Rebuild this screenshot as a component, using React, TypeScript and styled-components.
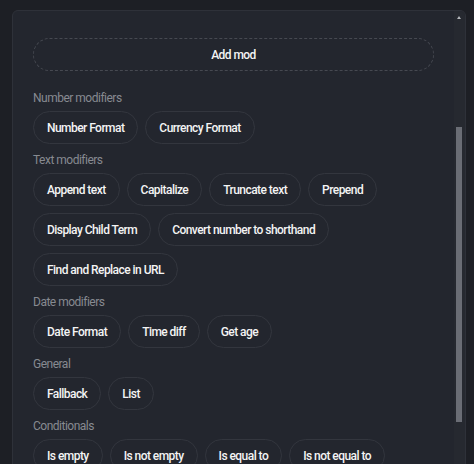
import React from 'react';
import styled, { createGlobalStyle } from 'styled-components';

const GlobalStyle = createGlobalStyle`
  html, body {
    margin: 0;
    padding: 0;
    background: #1d1f25;
    overflow: hidden;
    height: 100%;
  }
  #root {
    height: 100%;
  }
`;

type Group = { title: string; mods: string[] };

const groups: Group[] = [
  { title: 'Number modifiers', mods: ['Number Format', 'Currency Format'] },
  {
    title: 'Text modifiers',
    mods: [
      'Append text',
      'Capitalize',
      'Truncate text',
      'Prepend',
      'Display Child Term',
      'Convert number to shorthand',
      'Find and Replace in URL',
    ],
  },
  { title: 'Date modifiers', mods: ['Date Format', 'Time diff', 'Get age'] },
  { title: 'General', mods: ['Fallback', 'List'] },
  {
    title: 'Conditionals',
    mods: ['Is empty', 'Is not empty', 'Is equal to', 'Is not equal to'],
  },
];

const App = () => {
  return (
    <>
      <GlobalStyle />
      <Page>
        <Panel>
          <Content>
            <AddModButton type="button">Add mod</AddModButton>
            {groups.map((group) => (
              <Section key={group.title}>
                <SectionLabel>{group.title}</SectionLabel>
                <ChipRow>
                  {group.mods.map((mod) => (
                    <Chip key={mod} type="button">
                      {mod}
                    </Chip>
                  ))}
                </ChipRow>
              </Section>
            ))}
          </Content>
          <ScrollTrack>
            <ScrollArrow />
            <ScrollThumb />
          </ScrollTrack>
        </Panel>
      </Page>
    </>
  );
};

export default App;

const Page = styled.div`
  height: 100%;
  padding: 10px 8px 0 12px;
  box-sizing: border-box;
  font-family: Roboto, 'Liberation Sans', sans-serif;
`;

const Panel = styled.div`
  position: relative;
  height: 520px;
  background: #23262e;
  border: 1px solid #2e3139;
  border-radius: 6px;
  overflow: hidden;
  box-sizing: border-box;
`;

const Content = styled.div`
  padding: 27px 31px 0 20px;
`;

const AddModButton = styled.button`
  display: block;
  width: 100%;
  height: 33px;
  margin: 0 0 18px;
  background: transparent;
  border: 1px dashed #464951;
  border-radius: 999px;
  color: #f4f4f4;
  font-family: inherit;
  font-size: 12px;
  font-weight: 500;
  letter-spacing: -0.55px;
  cursor: pointer;
`;

const Section = styled.div`
  margin-bottom: 7px;
`;

const SectionLabel = styled.div`
  height: 18px;
  line-height: 19px;
  margin-bottom: 4px;
  color: #878a91;
  font-size: 12px;
  letter-spacing: -0.5px;
`;

const ChipRow = styled.div`
  display: flex;
  flex-wrap: wrap;
  gap: 7px 7px;
`;

const Chip = styled.button`
  height: 33px;
  padding: 0 13px;
  background: transparent;
  border: 1px solid #33363e;
  border-radius: 999px;
  color: #f4f4f4;
  font-family: inherit;
  font-size: 12px;
  font-weight: 500;
  letter-spacing: -0.55px;
  white-space: nowrap;
  cursor: pointer;
`;

const ScrollTrack = styled.div`
  position: absolute;
  top: 0;
  right: 0;
  bottom: 0;
  width: 11px;
  background: #262930;
`;

const ScrollArrow = styled.div`
  position: absolute;
  top: 5px;
  left: 3px;
  width: 0;
  height: 0;
  border-left: 2.5px solid transparent;
  border-right: 2.5px solid transparent;
  border-bottom: 3px solid #b4b6bb;
`;

const ScrollThumb = styled.div`
  position: absolute;
  top: 116px;
  left: 2px;
  width: 6px;
  height: 295px;
  background: #6a6d75;
`;
